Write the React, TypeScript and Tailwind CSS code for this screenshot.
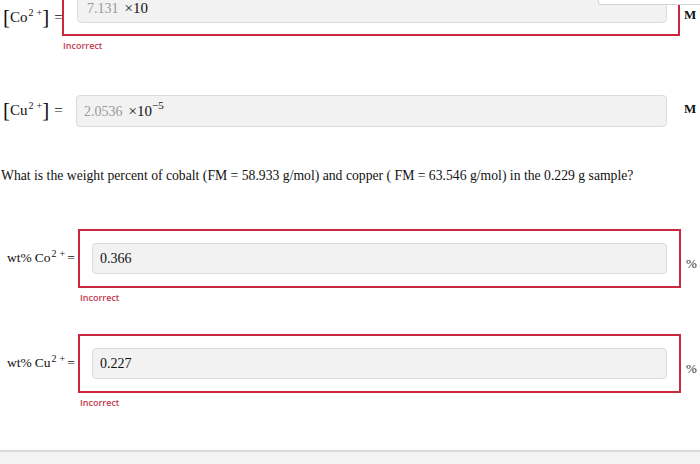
import React from "react";

const serif = { fontFamily: '"Liberation Serif", "Times New Roman", serif' };

function Incorrect({ ml }: { ml: string }) {
  return (
    <div
      className={`${ml} mt-[5px] text-[9px] leading-[10px] font-semibold text-[#c23a4e]`}
      style={{ fontFamily: '"Open Sans", "Noto Sans", sans-serif' }}
    >
      Incorrect
    </div>
  );
}

function IonLabel({ el }: { el: string }) {
  return (
    <span className="flex items-center text-[15px] text-[#111]" style={serif}>
      <span className="text-[21px] leading-none font-light">[</span>
      <span>{el}</span>
      <span className="text-[10px] relative -top-[5px] ml-[1px]">2</span>
      <span className="text-[10px] relative -top-[5px] ml-[3px]">+</span>
      <span className="text-[21px] leading-none font-light">]</span>
      <span className="ml-[5px]">=</span>
    </span>
  );
}

function WtLabel({ el }: { el: string }) {
  return (
    <span className="flex items-center text-[13.5px] text-[#111]" style={serif}>
      <span>wt%</span>
      <span className="ml-[3px]">{el}</span>
      <span className="text-[10px] relative -top-[5px] ml-[1px]">2</span>
      <span className="text-[10px] relative -top-[5px] ml-[3px]">+</span>
      <span className="ml-[2px]">=</span>
    </span>
  );
}

export default function App() {
  return (
    <div className="relative w-[700px] h-[464px] overflow-hidden bg-white" style={serif}>
      {/* overlay at the top right */}
      <div className="absolute left-[598px] top-0 w-[110px] h-[5px] bg-white border border-t-0 border-[#d4d4d4] rounded-bl-[3px] z-10" />

      <div className="flex flex-col">
        {/* Row 1: Co */}
        <div className="mt-[-21px] flex items-start">
          <div className="w-[62px] pl-[3px] pt-[20px] h-[57px] flex items-center">
            <IonLabel el="Co" />
          </div>
          <div className="w-[618px] border-2 border-[#c9283e] pl-[13px] pr-[11px] py-[11px]">
            <div className="h-[31px] rounded-[4px] border border-[#dcdcdc] bg-[#f2f2f2] flex items-center pt-[1px] pl-[9px] text-[14px]">
              <span className="text-[#9a9a9a]">7.131</span>
              <span className="ml-[6px] text-[15px] text-[#111]">×10</span>
            </div>
          </div>
          <div className="ml-[4px] mt-[26px] text-[13px] font-bold text-[#111]">M</div>
        </div>
        <Incorrect ml="ml-[63px]" />

        {/* Row 2: Cu */}
        <div className="mt-[31px] flex items-start">
          <div className="w-[62px] pl-[3px] h-[57px] flex items-center">
            <IonLabel el="Cu" />
          </div>
          <div className="w-[618px] border-2 border-transparent pl-[12px] pr-[11px] py-[11px]">
            <div className="h-[32px] rounded-[4px] border border-[#dcdcdc] bg-[#f2f2f2] flex items-center pl-[7px] text-[14px]">
              <span className="text-[#9a9a9a]">2.0536</span>
              <span className="ml-[6px] text-[15px] text-[#111]">×10</span>
              <span className="text-[11px] relative -top-[6px] text-[#111]">−5</span>
            </div>
          </div>
          <div className="ml-[4px] mt-[17px] text-[13px] font-bold text-[#111]">M</div>
        </div>

        {/* Question */}
        <div className="mt-[27px] pl-[1px] text-[13.7px] leading-[18px] text-[#111]">
          What is the weight percent of cobalt (FM = 58.933 g/mol) and copper ( FM = 63.546 g/mol) in the 0.229 g sample?
        </div>

        {/* Row 3: wt% Co */}
        <div className="mt-[44px] flex items-center">
          <div className="w-[78px] pl-[7px] flex items-center">
            <WtLabel el="Co" />
          </div>
          <div className="w-[603px] border-2 border-[#c9283e] pl-[12px] pr-[12px] py-[12px]">
            <div className="h-[31px] rounded-[4px] border border-[#dcdcdc] bg-[#f2f2f2] flex items-start pt-[4px] pl-[7px] text-[14px] text-[#111]">
              0.366
            </div>
          </div>
          <div className="ml-[5px] mt-[10px] text-[13px] text-[#333]">%</div>
        </div>
        <Incorrect ml="ml-[80px]" />

        {/* Row 4: wt% Cu */}
        <div className="mt-[31px] flex items-center">
          <div className="w-[78px] pl-[7px] flex items-center">
            <WtLabel el="Cu" />
          </div>
          <div className="w-[603px] border-2 border-[#c9283e] pl-[12px] pr-[12px] py-[12px]">
            <div className="h-[31px] rounded-[4px] border border-[#dcdcdc] bg-[#f2f2f2] flex items-start pt-[4px] pl-[7px] text-[14px] text-[#111]">
              0.227
            </div>
          </div>
          <div className="ml-[5px] mt-[10px] text-[13px] text-[#333]">%</div>
        </div>
        <Incorrect ml="ml-[80px]" />

        {/* Bottom bar */}
        <div className="mt-[42px] h-[30px] border-t-2 border-[#dadada] bg-[#f3f3f3]" />
      </div>
    </div>
  );
}
